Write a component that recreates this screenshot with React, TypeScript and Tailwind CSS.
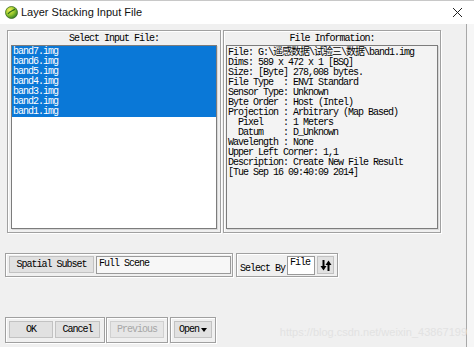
import { ReactNode } from "react";

const mono =
  "font-['Liberation_Mono','Noto_Sans_CJK_SC',monospace] text-[10px] tracking-[-1px]";

const groove =
  "border border-[#a0a0a0] shadow-[inset_1px_1px_0_#ffffff,1px_1px_0_#ffffff]";

const btn = "flex items-center justify-center border";

const bands = [
  "band7.img",
  "band6.img",
  "band5.img",
  "band4.img",
  "band3.img",
  "band2.img",
  "band1.img",
];

const info: ReactNode[] = [
  "File: G:\\遥感数据\\试验三\\数据\\band1.img",
  "Dims: 589 x 472 x 1 [BSQ]",
  "Size: [Byte] 278,008 bytes.",
  "File Type  : ENVI Standard",
  "Sensor Type: Unknown",
  "Byte Order : Host (Intel)",
  "Projection : Arbitrary (Map Based)",
  "  Pixel    : 1 Meters",
  "  Datum    : D_Unknown",
  "Wavelength : None",
  "Upper Left Corner: 1,1",
  "Description: Create New File Result",
  "[Tue Sep 16 09:40:09 2014]",
];

function EnviIcon() {
  return (
    <svg width="13" height="13" viewBox="0 0 13 13">
      <defs>
        <radialGradient id="g" cx="0.35" cy="0.3" r="0.75">
          <stop offset="0" stopColor="#f4ec5a" />
          <stop offset="0.5" stopColor="#9ccc2e" />
          <stop offset="1" stopColor="#2f7d24" />
        </radialGradient>
      </defs>
      <circle cx="6.5" cy="6.5" r="6" fill="url(#g)" stroke="#3b6b20" strokeWidth="0.8" />
      <path d="M3 8 C5 5, 8 5, 10 3" stroke="#2f6a1c" strokeWidth="1.2" fill="none" />
    </svg>
  );
}

function SortIcon() {
  return (
    <svg width="12" height="11" viewBox="0 0 12 11">
      <path d="M3.5 0 V7" stroke="#000" strokeWidth="2" />
      <path d="M0.5 6 L3.5 10.5 L6.5 6 Z" fill="#000" />
      <path d="M8.5 11 V4" stroke="#000" strokeWidth="2" />
      <path d="M5.5 5 L8.5 0.5 L11.5 5 Z" fill="#000" />
    </svg>
  );
}

function TitleBar() {
  return (
    <div className="h-[24px] border-t border-[#c8c8c8] bg-white flex items-center pl-[5px] pr-[11px]">
      <EnviIcon />
      <span className="ml-[3px] font-['Liberation_Sans',sans-serif] text-[11px] text-[#111]">
        Layer Stacking Input File
      </span>
      <svg className="ml-auto" width="11" height="11" viewBox="0 0 11 11">
        <path d="M1 1 L10 10 M10 1 L1 10" stroke="#222" strokeWidth="1" />
      </svg>
    </div>
  );
}

function InputPanel() {
  return (
    <div className={`${groove} w-[214px] h-[203px] flex flex-col`}>
      <div className={`${mono} h-[14px] flex items-center justify-center`}>
        Select Input File:
      </div>
      <div className="mx-[3px] mb-[3px] flex-1 bg-white border border-[#7c7c7c] shadow-[1px_1px_0_#d8d8d8]">
        <div className="bg-[#0a78d7] pt-[1px]">
          {bands.map((b) => (
            <div key={b} className={`${mono} h-[10px] leading-[10px] pl-[1px] text-white`}>
              {b}
            </div>
          ))}
        </div>
      </div>
    </div>
  );
}

function InfoPanel() {
  return (
    <div className={`${groove} w-[218px] h-[203px] flex flex-col`}>
      <div className={`${mono} h-[14px] flex items-center justify-center`}>
        File Information:
      </div>
      <div className="mx-[2px] mb-[3px] flex-1 bg-[#f3f3f3] border border-[#7c7c7c] shadow-[1px_1px_0_#d8d8d8] pt-[2px] pl-[1px]">
        {info.map((line, i) => (
          <div key={i} className={`${mono} h-[10px] leading-[10px] whitespace-pre`}>
            {line}
          </div>
        ))}
      </div>
    </div>
  );
}

export default function App() {
  return (
    <div className="w-[474px] h-[347px] bg-[#f0f0f0] text-black relative overflow-hidden flex flex-col">
      <TitleBar />
      <div className="flex flex-1">
        <div className="w-[466px] pl-[5px] flex flex-col">
          <div className="mt-[6px] pl-[2px] flex gap-[2px]">
            <InputPanel />
            <InfoPanel />
          </div>

          <div className="mt-[20px] flex gap-[3px]">
            <div className={`${groove} w-[228px] h-[24px] flex items-start gap-[2px] pl-[3px] pt-[2px]`}>
              <div className={`${btn} ${mono} bg-[#e1e1e1] border-[#c2c2c2] w-[85px] h-[17px]`}>
                Spatial Subset
              </div>
              <div className={`${mono} w-[135px] h-[18px] bg-[#f7f7f7] border border-[#9a9a9a] pl-[2px] leading-[14px]`}>
                Full Scene
              </div>
            </div>
            <div className={`${groove} w-[102px] h-[24px] flex items-start pl-[3px] pt-[2px]`}>
              <span className={`${mono} mt-[5px] w-[47px]`}>Select By</span>
              <div className={`${mono} w-[28px] h-[19px] bg-white border border-[#9a9a9a] pl-[2px] leading-[12px]`}>
                File
              </div>
              <div className={`${btn} bg-[#e1e1e1] border-[#c2c2c2] ml-[2px] w-[17px] h-[18px]`}>
                <SortIcon />
              </div>
            </div>
          </div>

          <div className="mt-[40px] flex gap-[1px]">
            <div className={`${groove} w-[100px] h-[26px] flex items-start gap-[2px] pl-[3px] pt-[3px]`}>
              <div className={`${btn} ${mono} bg-[#e1e1e1] border-[#c2c2c2] w-[44px] h-[17px]`}>OK</div>
              <div className={`${btn} ${mono} bg-[#e1e1e1] border-[#c2c2c2] w-[45px] h-[17px]`}>Cancel</div>
            </div>
            <div className={`${groove} w-[62px] h-[26px] flex items-start pl-[3px] pt-[3px]`}>
              <div className={`${btn} ${mono} w-[54px] h-[17px] bg-[#e6e6e6] border-[#d0d0d0] text-[#a6a6a6]`}>
                Previous
              </div>
            </div>
            <div className={`${groove} ml-[1px] w-[46px] h-[26px] flex items-start pl-[3px] pt-[3px]`}>
              <div className={`${btn} ${mono} bg-[#e1e1e1] border-[#c2c2c2] w-[38px] h-[17px] gap-[2px]`}>
                Open
                <svg width="6" height="4" viewBox="0 0 6 4">
                  <path d="M0 0 H6 L3 4 Z" fill="#000" />
                </svg>
              </div>
            </div>
          </div>
        </div>
        <div className="w-px bg-[#a8a8a8]" />
        <div className="flex-1 bg-[#f6f6f6]" />
      </div>
      <span className="absolute right-[7px] bottom-[7px] font-['Liberation_Sans',sans-serif] text-[11px] text-[#e2e2e2]">
        https://blog.csdn.net/weixin_43867199
      </span>
    </div>
  );
}
